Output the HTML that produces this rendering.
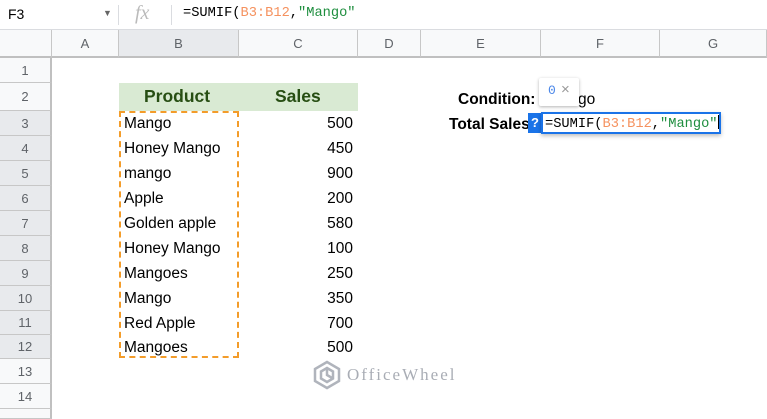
<!DOCTYPE html><html><head><style>
body{margin:0;width:767px;height:413px;overflow:hidden;background:#fff;font-family:"Liberation Sans",Arial,sans-serif;position:relative}
.a{position:absolute}
.ch{position:absolute;top:30px;height:28px;background:#f8f9fa;border-right:1px solid #c7c7c7;border-bottom:2px solid #c0c0c0;box-sizing:border-box;text-align:center;line-height:27px;font-size:13px;color:#5f6368}
.rh{position:absolute;left:0;width:52px;background:#f8f9fa;border-right:2px solid #c0c0c0;border-bottom:1px solid #c7c7c7;box-sizing:border-box;text-align:center;font-size:13px;color:#5f6368}
.sel{background:#e8eaed}
.t{position:absolute;font-size:15.5px;color:#000}
.n{position:absolute;font-size:15.5px;color:#000;text-align:right;width:100px;left:253px}
</style></head><body>
<div class="a" style="left:0;top:0;width:767px;height:29px;border-bottom:1px solid #dadce0;background:#fff"></div>
<div class="a" style="left:8px;top:6px;font-size:14px;color:#000">F3</div>
<div class="a" style="left:103px;top:8px;font-size:9px;color:#666">▼</div>
<div class="a" style="left:118px;top:5px;width:1px;height:20px;background:#dadce0"></div>
<div class="a" style="left:135px;top:2px;font-family:'Liberation Serif',serif;font-style:italic;font-size:20px;color:#bbb">fx</div>
<div class="a" style="left:171px;top:5px;width:1px;height:20px;background:#dadce0"></div>
<div class="a" style="left:183px;top:6px;font-family:'Liberation Mono',monospace;font-size:13.7px;color:#000">=SUMIF(<span style="color:#f5925f">B3:B12</span>,<span style="color:#1e8e3e">"Mango"</span></div>
<div class="ch" style="left:0;width:52px"></div>
<div class="ch" style="left:52px;width:67px">A</div>
<div class="ch sel" style="left:119px;width:120px">B</div>
<div class="ch" style="left:239px;width:119px">C</div>
<div class="ch" style="left:358px;width:63px">D</div>
<div class="ch" style="left:421px;width:120px">E</div>
<div class="ch" style="left:541px;width:119px">F</div>
<div class="ch" style="left:660px;width:107px">G</div>
<div class="rh" style="top:58px;height:25px;line-height:25px">1</div>
<div class="rh" style="top:83px;height:28px;line-height:28px">2</div>
<div class="rh sel" style="top:111px;height:25px;line-height:25px">3</div>
<div class="rh sel" style="top:136px;height:25px;line-height:25px">4</div>
<div class="rh sel" style="top:161px;height:25px;line-height:25px">5</div>
<div class="rh sel" style="top:186px;height:25px;line-height:25px">6</div>
<div class="rh sel" style="top:211px;height:25px;line-height:25px">7</div>
<div class="rh sel" style="top:236px;height:25px;line-height:25px">8</div>
<div class="rh sel" style="top:261px;height:25px;line-height:25px">9</div>
<div class="rh sel" style="top:286px;height:25px;line-height:25px">10</div>
<div class="rh sel" style="top:311px;height:24px;line-height:24px">11</div>
<div class="rh sel" style="top:335px;height:24px;line-height:24px">12</div>
<div class="rh" style="top:359px;height:25px;line-height:25px">13</div>
<div class="rh" style="top:384px;height:25px;line-height:25px">14</div>
<div class="rh" style="top:409px;height:10px"></div>
<div class="a" style="left:119px;top:83px;width:239px;height:28px;background:#d9ead3"></div>
<div class="a" style="left:144px;top:86px;font-size:17.5px;font-weight:bold;color:#274e13">Product</div>
<div class="a" style="left:275px;top:86px;font-size:17.5px;font-weight:bold;color:#274e13">Sales</div>
<div class="a" style="left:119px;top:111px;width:120px;height:247px;border:2px dashed #f39c2a;box-sizing:border-box"></div>
<div class="t" style="left:124px;top:115px">Mango</div><div class="n" style="top:115px">500</div>
<div class="t" style="left:124px;top:140px">Honey Mango</div><div class="n" style="top:140px">450</div>
<div class="t" style="left:124px;top:165px">mango</div><div class="n" style="top:165px">900</div>
<div class="t" style="left:124px;top:190px">Apple</div><div class="n" style="top:190px">200</div>
<div class="t" style="left:124px;top:215px">Golden apple</div><div class="n" style="top:215px">580</div>
<div class="t" style="left:124px;top:240px">Honey Mango</div><div class="n" style="top:240px">100</div>
<div class="t" style="left:124px;top:265px">Mangoes</div><div class="n" style="top:265px">250</div>
<div class="t" style="left:124px;top:290px">Mango</div><div class="n" style="top:290px">350</div>
<div class="t" style="left:124px;top:315px">Red Apple</div><div class="n" style="top:315px">700</div>
<div class="t" style="left:124px;top:339px">Mangoes</div><div class="n" style="top:339px">500</div>
<div class="t" style="left:458px;top:91px;font-weight:bold">Condition:</div>
<div class="t" style="left:578px;top:91px">go</div>
<div class="t" style="left:449px;top:116px;font-weight:bold">Total Sales</div>
<div class="a" style="left:539px;top:78px;width:40px;height:28px;background:#fff;box-shadow:0 1px 3px rgba(0,0,0,.3);border-radius:2px"></div>
<div class="a" style="left:548px;top:83px;font-family:'Liberation Mono',monospace;font-size:13px;color:#4a86e8">0</div>
<div class="a" style="left:561px;top:81px;font-size:15px;color:#999">×</div>
<div class="a" style="left:528px;top:113px;width:14px;height:20px;background:#1a73e8;color:#fff;font-size:13px;font-weight:bold;text-align:center;line-height:20px">?</div>
<div class="a" style="left:541px;top:112px;width:180px;height:22px;border:2px solid #1a73e8;box-sizing:border-box;background:#fff;box-shadow:0 2px 4px rgba(0,0,0,.25)"></div>
<div class="a" style="left:545px;top:115px;font-family:'Liberation Mono',monospace;font-size:13.7px;color:#000">=SUMIF(<span style="color:#f5925f">B3:B12</span>,<span style="color:#1e8e3e">"Mango"</span><span style="display:inline-block;width:1px;height:14px;background:#000;vertical-align:-2px"></span></div>
<svg class="a" style="left:312px;top:360px" width="30" height="30" viewBox="0 0 30 30" fill="none" stroke="#b0b4bc" stroke-width="2.5"><path d="M15 2 L27 9 L27 21 L15 28 L3 21 L3 9 Z"/><path d="M15 8 L21 11.5 L21 18.5 L15 22 L9 18.5 L9 11.5 Z"/><path d="M15 8 L15 15 L21 18.5"/></svg>
<div class="a" style="left:347px;top:365px;font-family:'Liberation Serif',serif;font-size:17px;letter-spacing:2px;color:#a9adb5">OfficeWheel</div>
</body></html>
